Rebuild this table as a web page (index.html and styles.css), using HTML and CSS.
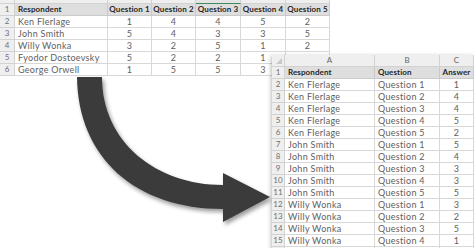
FILE: index.html
```html
<!DOCTYPE html>
<html>
<head>
<meta charset="utf-8">
<link rel="stylesheet" href="styles.css">
</head>
<body>
<div class="page">
  <div class="sheet sheet-top">
    <div class="grid grid-top">
      <div class="c corner"></div><div class="c colh">A</div><div class="c colh">B</div><div class="c colh">C</div><div class="c colh sel">D</div><div class="c colh">E</div><div class="c colh">F</div>
      <div class="c rn">1</div><div class="c hd">Respondent</div><div class="c hd ctr">Question 1</div><div class="c hd ctr">Question 2</div><div class="c hd ctr">Question 3</div><div class="c hd ctr">Question 4</div><div class="c hd ctr">Question 5</div>
      <div class="c rn">2</div><div class="c tx">Ken Flerlage</div><div class="c ctr">1</div><div class="c ctr">4</div><div class="c ctr">4</div><div class="c ctr">5</div><div class="c ctr">2</div>
      <div class="c rn">3</div><div class="c tx">John Smith</div><div class="c ctr">5</div><div class="c ctr">4</div><div class="c ctr">3</div><div class="c ctr">3</div><div class="c ctr">5</div>
      <div class="c rn">4</div><div class="c tx">Willy Wonka</div><div class="c ctr">3</div><div class="c ctr">2</div><div class="c ctr">5</div><div class="c ctr">1</div><div class="c ctr">2</div>
      <div class="c rn">5</div><div class="c tx">Fyodor Dostoevsky</div><div class="c ctr">5</div><div class="c ctr">2</div><div class="c ctr">2</div><div class="c ctr">1</div><div class="c ctr"></div>
      <div class="c rn">6</div><div class="c tx">George Orwell</div><div class="c ctr">1</div><div class="c ctr">5</div><div class="c ctr">5</div><div class="c ctr">3</div><div class="c ctr"></div>
    </div>
  </div>

  <svg class="arrow" width="474" height="248" viewBox="0 0 474 248" xmlns="http://www.w3.org/2000/svg">
    <defs>
      <filter id="sh" x="-20%" y="-20%" width="140%" height="140%">
        <feGaussianBlur in="SourceAlpha" stdDeviation="2"/>
        <feOffset dx="2" dy="3" result="b"/>
        <feComponentTransfer><feFuncA type="linear" slope="0.4"/></feComponentTransfer>
        <feMerge><feMergeNode/><feMergeNode in="SourceGraphic"/></feMerge>
      </filter>
    </defs>
    <path filter="url(#sh)" fill="#3b3b3b" d="M77,77 C78,158 136,209 223,209 L223,222 L270,197 L223,173 L223,185 C156,185 102,142 102,77 Z"/>
  </svg>

  <div class="sheet sheet-right">
    <div class="grid grid-right">
      <div class="c corner"><span class="tri"></span></div><div class="c colh">A</div><div class="c colh">B</div><div class="c colh">C</div>
      <div class="c rn">1</div><div class="c hd">Respondent</div><div class="c hd">Question</div><div class="c hd ctr">Answer</div>
      <div class="c rn">2</div><div class="c tx">Ken Flerlage</div><div class="c tx">Question 1</div><div class="c ctr">1</div>
      <div class="c rn">3</div><div class="c tx">Ken Flerlage</div><div class="c tx">Question 2</div><div class="c ctr">4</div>
      <div class="c rn">4</div><div class="c tx">Ken Flerlage</div><div class="c tx">Question 3</div><div class="c ctr">4</div>
      <div class="c rn">5</div><div class="c tx">Ken Flerlage</div><div class="c tx">Question 4</div><div class="c ctr">5</div>
      <div class="c rn">6</div><div class="c tx">Ken Flerlage</div><div class="c tx">Question 5</div><div class="c ctr">2</div>
      <div class="c rn">7</div><div class="c tx">John Smith</div><div class="c tx">Question 1</div><div class="c ctr">5</div>
      <div class="c rn">8</div><div class="c tx">John Smith</div><div class="c tx">Question 2</div><div class="c ctr">4</div>
      <div class="c rn">9</div><div class="c tx">John Smith</div><div class="c tx">Question 3</div><div class="c ctr">3</div>
      <div class="c rn">10</div><div class="c tx">John Smith</div><div class="c tx">Question 4</div><div class="c ctr">3</div>
      <div class="c rn">11</div><div class="c tx">John Smith</div><div class="c tx">Question 5</div><div class="c ctr">5</div>
      <div class="c rn">12</div><div class="c tx">Willy Wonka</div><div class="c tx">Question 1</div><div class="c ctr">3</div>
      <div class="c rn">13</div><div class="c tx">Willy Wonka</div><div class="c tx">Question 2</div><div class="c ctr">2</div>
      <div class="c rn">14</div><div class="c tx">Willy Wonka</div><div class="c tx">Question 3</div><div class="c ctr">5</div>
      <div class="c rn">15</div><div class="c tx">Willy Wonka</div><div class="c tx">Question 4</div><div class="c ctr">1</div>
      <div class="c rn"></div><div class="c tx"></div><div class="c tx"></div><div class="c ctr"></div>
    </div>
  </div>
</div>
</body>
</html>
```

FILE: styles.css
```css
html, body {
  margin: 0;
  padding: 0;
  background: #ffffff;
}
.page {
  position: relative;
  width: 474px;
  height: 248px;
  overflow: hidden;
  font-family: Lato, "Open Sans", sans-serif;
  font-size: 9px;
  letter-spacing: 0.3px;
  color: #5e5e5e;
}
.sheet-top {
  height: 77px;
  width: 330px;
  overflow: hidden;
}
.grid {
  display: grid;
  grid-auto-rows: 12px;
}
.grid-top {
  margin-top: -8px;
  grid-template-columns: 15px 93px 44px 44px 45px 45px 44px;
}
.c {
  box-sizing: border-box;
  border-right: 1px solid #d8d8d8;
  border-bottom: 1px solid #d8d8d8;
  line-height: 11px;
  white-space: nowrap;
  overflow: hidden;
  background: #ffffff;
}
.corner {
  position: relative;
  background: #efefef;
  border-color: #d2d2d2;
}
.tri {
  position: absolute;
  right: 2px;
  bottom: 2px;
  width: 0;
  height: 0;
  border-left: 6px solid transparent;
  border-bottom: 6px solid #c8c8c8;
}
.colh {
  background: #efefef;
  color: #666666;
  text-align: center;
  font-size: 8px;
  letter-spacing: 0;
  border-color: #d2d2d2;
}
.colh.sel {
  background: #e4e4e4;
  border-bottom: 1px solid #3f8a5c;
}
.rn {
  background: #efefef;
  color: #707070;
  text-align: center;
  font-size: 8px;
  letter-spacing: 0;
  border-color: #d2d2d2;
}
.hd {
  background: #dedede;
  color: #262626;
  font-weight: 700;
  font-size: 8px;
  letter-spacing: 0.1px;
  padding-left: 3px;
  border-color: #cacaca;
}
.hd.ctr {
  padding-left: 0;
}
.tx {
  padding-left: 3px;
}
.ctr {
  text-align: center;
}
.arrow {
  position: absolute;
  left: 0;
  top: 0;
  pointer-events: none;
}
.sheet-right {
  position: absolute;
  left: 272px;
  top: 55px;
  box-shadow: -1px 1px 4px rgba(0, 0, 0, 0.28);
}
.grid-right {
  grid-template-columns: 13px 90px 65px 34px;
}
```
